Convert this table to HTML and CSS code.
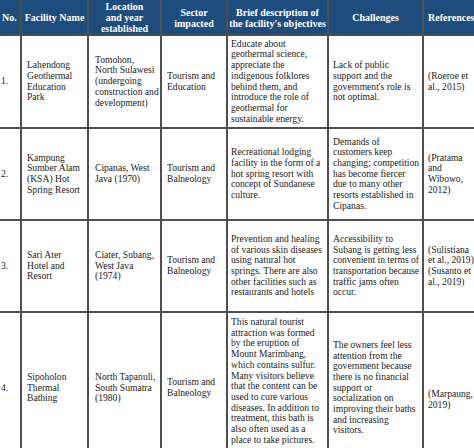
FILE: index.html
```html
<!DOCTYPE html>
<html lang="en">
<head>
<meta charset="utf-8">
<title>Geothermal facilities</title>
<link rel="stylesheet" href="styles.css">
</head>
<body>
<div class="table">
  <div class="th th-no">No.</div>
  <div class="th">Facility Name</div>
  <div class="th">Location<br>and year<br>established</div>
  <div class="th">Sector<br>impacted</div>
  <div class="th">Brief description of<br>the facility's objectives</div>
  <div class="th">Challenges</div>
  <div class="th th-ref">References</div>

  <div class="td c-no">1.</div>
  <div class="td c-name">Lahendong<br>Geothermal<br>Education<br>Park</div>
  <div class="td c-loc">Tomohon,<br>North Sulawesi<br>(undergoing<br>construction and<br>development)</div>
  <div class="td c-sec">Tourism and<br>Education</div>
  <div class="td c-desc">Educate about<br>geothermal science,<br>appreciate the<br>indigenous folklores<br>behind them, and<br>introduce the role of<br>geothermal for<br>sustainable energy.</div>
  <div class="td c-ch">Lack of public<br>support and the<br>government's role is<br>not optimal.</div>
  <div class="td c-ref">(Roeroe et<br>al., 2015)</div>

  <div class="td c-no">2.</div>
  <div class="td c-name">Kampung<br>Sumber Alam<br>(KSA) Hot<br>Spring Resort</div>
  <div class="td c-loc">Cipanas, West<br>Java (1970)</div>
  <div class="td c-sec">Tourism and<br>Balneology</div>
  <div class="td c-desc">Recreational lodging<br>facility in the form of a<br>hot spring resort with<br>concept of Sundanese<br>culture.</div>
  <div class="td c-ch">Demands of<br>customers keep<br>changing; competition<br>has become fiercer<br>due to many other<br>resorts established in<br>Cipanas.</div>
  <div class="td c-ref">(Pratama<br>and<br>Wibowo,<br>2012)</div>

  <div class="td c-no">3.</div>
  <div class="td c-name">Sari Ater<br>Hotel and<br>Resort</div>
  <div class="td c-loc">Ciater, Subang,<br>West Java<br>(1974)</div>
  <div class="td c-sec">Tourism and<br>Balneology</div>
  <div class="td c-desc">Prevention and healing<br>of various skin diseases<br>using natural hot<br>springs. There are also<br>other facilities such as<br>restaurants and hotels</div>
  <div class="td c-ch">Accessibility to<br>Subang is getting less<br>convenient in terms of<br>transportation because<br>traffic jams often<br>occur.</div>
  <div class="td c-ref">(Sulistiana<br>et al., 2019);<br>(Susanto et<br>al., 2019)</div>

  <div class="td c-no">4.</div>
  <div class="td c-name">Sipoholon<br>Thermal<br>Bathing</div>
  <div class="td c-loc">North Tapanuli,<br>South Sumatra<br>(1980)</div>
  <div class="td c-sec">Tourism and<br>Balneology</div>
  <div class="td c-desc top">This natural tourist<br>attraction was formed<br>by the eruption of<br>Mount Marimbang,<br>which contains sulfur.<br>Many visitors believe<br>that the content can be<br>used to cure various<br>diseases. In addition to<br>treatment, this bath is<br>also often used as a<br>place to take pictures.</div>
  <div class="td c-ch">The owners feel less<br>attention from the<br>government because<br>there is no financial<br>support or<br>socialization on<br>improving their baths<br>and increasing<br>visitors.</div>
  <div class="td c-ref low">(Marpaung,<br>2019)</div>
</div>
</body>
</html>
```

FILE: styles.css
```css
html, body {
  margin: 0;
  padding: 0;
  background: #ffffff;
}

body {
  width: 474px;
  height: 448px;
  overflow: hidden;
  font-family: "Liberation Serif", "Times New Roman", serif;
  font-size: 9.6px;
  color: #222222;
}

.table {
  display: grid;
  grid-template-columns: 23px 65px 71px 64px 99px 93px 59px;
  grid-template-rows: 34px 91px 90px 90px 150px;
  gap: 2px;
  padding: 2px;
  background: #4f4f4f;
  margin: -2px 0 0 -5px;
  width: max-content;
}

.th {
  background: #1e4c7c;
  color: #ffffff;
  font-weight: bold;
  font-size: 10px;
  line-height: 11px;
  display: flex;
  align-items: center;
  justify-content: center;
  text-align: center;
  white-space: nowrap;
  padding-top: 1px;
}

.th-no {
  justify-content: flex-start;
  padding-left: 5px;
}

.th-ref {
  justify-content: flex-start;
  padding-left: 4px;
}

.td {
  background: #ffffff;
  line-height: 10.7px;
  display: flex;
  align-items: center;
  white-space: nowrap;
}

.c-no { padding-left: 4px; }
.c-name { padding-left: 5px; }
.c-loc { padding-left: 6px; }
.c-sec { padding-left: 5px; }
.c-desc { padding-left: 3px; }
.c-ch { padding-left: 4px; }
.c-ref { padding-left: 4px; }

.c-desc.top {
  align-items: flex-start;
  padding-top: 4px;
}

.c-ref.low {
  padding-top: 24px;
}
```
